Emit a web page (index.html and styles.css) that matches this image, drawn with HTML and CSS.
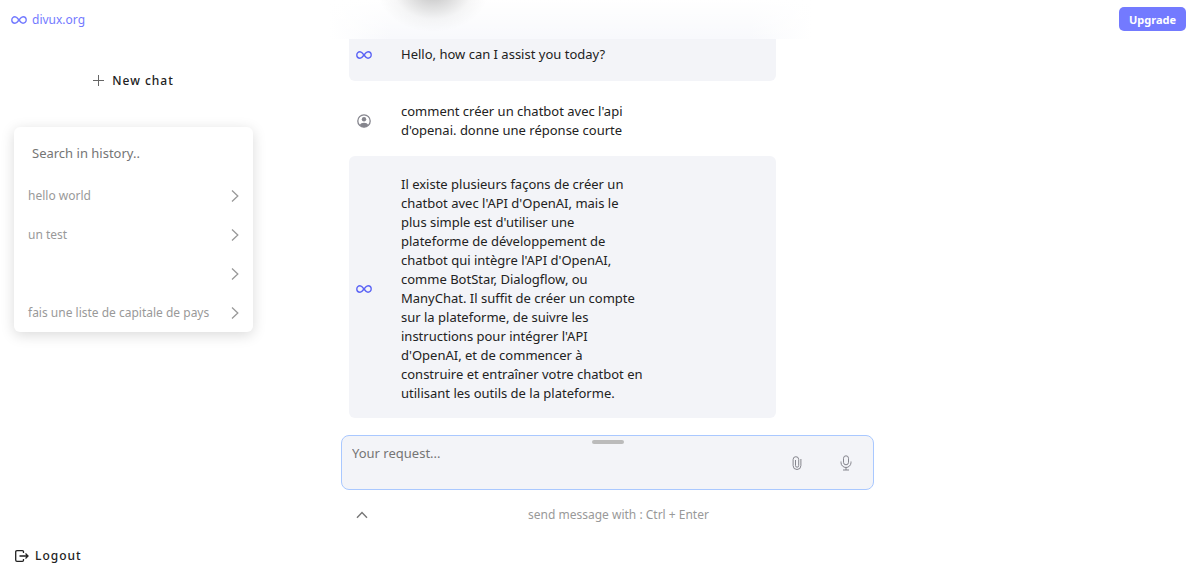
FILE: index.html
```html
<!DOCTYPE html>
<html lang="en">
<head>
    <meta charset="UTF-8">
    <meta name="viewport" content="width=device-width, initial-scale=1.0">
    <title>divux.org</title>
    <link rel="stylesheet" href="styles.css">
</head>
<body>
    <!-- shared icons -->
    <svg class="symbols" aria-hidden="true">
        <symbol id="infinity" viewBox="0 0 16 8">
            <path d="M8 4C6.600 2 5.600 .8 4 .8a3.200 3.200 0 0 0 0 6.400C5.600 7.200 6.600 6 8 4s2.400-3.200 4-3.200a3.200 3.200 0 0 1 0 6.400C10.400 7.200 9.400 6 8 4z"/>
        </symbol>
        <symbol id="chevron" viewBox="0 0 8 14">
            <path d="M1 1.500L6.800 7L1 12.500"/>
        </symbol>
    </svg>

    <div class="app">
        <aside class="sidebar">
            <a class="brand" href="#">
                <svg class="infinity"><use href="#infinity"/></svg>
                divux.org
            </a>

            <button class="new-chat" type="button">
                <svg width="11" height="11" viewBox="0 0 11 11"><path d="M5.500 0v11M0 5.500h11"/></svg>
                New chat
            </button>

            <div class="history">
                <input class="search" type="text" placeholder="Search in history.." aria-label="Search in history">
                <ul>
                    <li><a href="#">hello world <svg class="chevron"><use href="#chevron"/></svg></a></li>
                    <li><a href="#">un test <svg class="chevron"><use href="#chevron"/></svg></a></li>
                    <li><a href="#" aria-label="Untitled"><span></span><svg class="chevron"><use href="#chevron"/></svg></a></li>
                    <li><a href="#">fais une liste de capitale de pays <svg class="chevron"><use href="#chevron"/></svg></a></li>
                </ul>
            </div>

            <button class="logout" type="button">
                <svg width="14" height="12" viewBox="0 0 14 12">
                    <path d="M8.500 3V1.800Q8.500.7 7.400.7H2Q.7.700.7 2v8q0 1.300 1.300 1.300h5.400q1.100 0 1.100-1.100V9M4.500 6h8.300M10.500 3.500L13 6l-2.500 2.500"/>
                </svg>
                Logout
            </button>
        </aside>

        <main class="main">
            <div class="chat">
                <div class="chat-top"></div>
                <div class="message bot greeting">
                    <svg class="infinity"><use href="#infinity"/></svg>
                    <p>Hello, how can I assist you today?</p>
                </div>
                <div class="message user">
                    <svg class="avatar" width="14" height="14" viewBox="0 0 14 14">
                        <circle class="ring" cx="7" cy="7" r="6.200"/>
                        <circle cx="7" cy="5.300" r="2.200"/>
                        <path d="M2.600 11Q3.800 8.700 7 8.700T11.400 11Q9.500 13.200 7 13.200T2.600 11z"/>
                    </svg>
                    <p>comment créer un chatbot avec l'api d'openai. donne une réponse courte</p>
                </div>
                <div class="message bot">
                    <svg class="infinity"><use href="#infinity"/></svg>
                    <p>Il existe plusieurs façons de créer un chatbot avec l'API d'OpenAI, mais le plus simple est d'utiliser une plateforme de développement de chatbot qui intègre l'API d'OpenAI, comme BotStar, Dialogflow, ou ManyChat. Il suffit de créer un compte sur la plateforme, de suivre les instructions pour intégrer l'API d'OpenAI, et de commencer à construire et entraîner votre chatbot en utilisant les outils de la plateforme.</p>
                </div>
            </div>

            <form class="composer">
                <span class="handle"></span>
                <textarea placeholder="Your request..." aria-label="Your request"></textarea>
                <button type="button" aria-label="Attach a file">
                    <svg width="10" height="14" viewBox="0 0 10 14">
                        <path d="M8.900 3v6.600a3.900 3.900 0 0 1-7.800 0V3.500a2.800 2.800 0 0 1 5.600 0V9.600a1.600 1.600 0 0 1-3.200 0V4"/>
                    </svg>
                </button>
                <button type="button" aria-label="Record">
                    <svg width="12" height="16" viewBox="0 0 12 16">
                        <rect x="3.500" y=".8" width="5" height="9" rx="2.500"/>
                        <path d="M1 6.500v1a5 5 0 0 0 10 0v-1M6 12.500V15M3 15h6"/>
                    </svg>
                </button>
            </form>

            <div class="hint">
                <button type="button" aria-label="Show options">
                    <svg width="12" height="8" viewBox="0 0 12 8"><path d="M1 6.800L6 1.500l5 5.300"/></svg>
                </button>
                <p>send message with : Ctrl + Enter</p>
            </div>
        </main>

        <div class="account">
            <button class="upgrade" type="button">Upgrade</button>
        </div>
    </div>
</body>
</html>
```
FILE: styles.css
```css
* {
    box-sizing: border-box;
}
body {
    margin: 0;
    background-color: #fff;
    color: #222;
    font-family: "Noto Sans", "Open Sans", sans-serif;
    font-size: 13px;
    line-height: 19px;
}
button {
    padding: 0;
    border: none;
    background: none;
    color: inherit;
    font: inherit;
    cursor: pointer;
}
svg {
    fill: none;
    stroke: currentColor;
    flex: none;
}
p, ul {
    margin: 0;
    padding: 0;
}
.symbols {
    display: none;
}
.infinity {
    width: 16px;
    height: 8px;
    color: #5b63f5;
    stroke-width: 1.4;
}
.app {
    display: grid;
    grid-template-columns: 267px 1fr 252px;
    grid-template-rows: minmax(0, 1fr);
    height: 100vh;
}

/* sidebar */
.sidebar {
    display: flex;
    flex-direction: column;
    padding: 10px 14px 12px;
}
.brand {
    display: flex;
    align-items: center;
    gap: 5px;
    margin-left: -3px;
    color: #737aff;
    font-size: 12px;
    text-decoration: none;
}
.brand .infinity {
    color: inherit;
}
.new-chat,
.logout {
    display: flex;
    align-items: center;
    font-size: 12px;
    font-weight: 500;
    letter-spacing: 1px;
}
.new-chat {
    align-self: center;
    gap: 8px;
    margin: 42px 0 37px;
}
.new-chat svg {
    color: #666;
}
.history {
    border-radius: 6px;
    background-color: #fff;
    box-shadow: 0 3px 14px rgba(0, 0, 0, 0.15);
}
.history ul {
    list-style: none;
}
.history a {
    display: flex;
    align-items: center;
    justify-content: space-between;
    height: 39px;
    padding: 0 14px;
    color: #999;
    font-size: 12px;
    text-decoration: none;
}
.chevron {
    width: 8px;
    height: 14px;
    stroke-width: 1.3;
}
.search {
    display: block;
    width: 100%;
    height: 49px;
    padding: 3px 18px 0;
    border: none;
    background: none;
    font: inherit;
    outline: none;
}
.search::placeholder,
textarea::placeholder {
    color: #757575;
}
.logout {
    gap: 6px;
    margin-top: auto;
    margin-left: 1px;
}
.logout svg {
    stroke-width: 1.3;
}

/* conversation */
.main {
    display: flex;
    flex-direction: column;
    min-width: 0;
    padding: 0 74px 49px;
}
.chat {
    position: relative;
    display: flex;
    flex: 1;
    flex-direction: column;
    justify-content: flex-end;
    min-height: 0;
    margin: 0 -11px 17px;
    padding: 0 109px 0 19px;
    overflow: hidden;
}
.chat-top {
    position: absolute;
    z-index: 1;
    top: 0;
    left: 0;
    right: 74px;
    height: 39px;
    background: linear-gradient(90deg, #fff, #f8f9fc 60px calc(100% - 60px), #fff);
}
.chat-top::before {
    content: "";
    position: absolute;
    inset: 0;
    background:
        radial-gradient(ellipse 56px 42px at 103px -10px, rgba(0, 0, 0, 0.26), rgba(0, 0, 0, 0.14) 35%, rgba(0, 0, 0, 0.03) 70%, transparent),
        linear-gradient(#fff, transparent);
}
.message {
    display: flex;
    flex: none;
    align-items: center;
    padding: 19px 7px 15px;
    border-radius: 6px;
}
.message p {
    width: 243px;
    margin-left: 29px;
}
.bot {
    background-color: #f3f4f8;
}
.greeting {
    padding-bottom: 17px;
}
.user {
    padding: 21px 8px 16px;
}
.user p {
    margin-left: 30px;
}
.avatar {
    color: #85858d;
    fill: currentColor;
    stroke: none;
}
.avatar .ring {
    fill: none;
    stroke: currentColor;
    stroke-width: 1.3;
}

/* composer */
.composer {
    position: relative;
    display: flex;
    align-items: center;
    gap: 38px;
    height: 55px;
    padding: 0 21px 0 10px;
    border: 1px solid #a9c8ff;
    border-radius: 8px;
    background-color: #f3f4f8;
    color: #85858d;
}
.composer button {
    display: flex;
}
.handle {
    position: absolute;
    top: 4px;
    left: 50%;
    width: 32px;
    height: 4px;
    border-radius: 2px;
    background-color: #bbb;
    transform: translateX(-50%);
}
textarea {
    flex: 1;
    min-width: 0;
    height: 100%;
    padding: 8px 0;
    border: none;
    background: none;
    font: inherit;
    resize: none;
    outline: none;
}
.hint {
    display: grid;
    grid-template-columns: 12px 1fr;
    align-items: center;
    gap: 10px;
    margin-top: 12px;
    padding: 0 15px;
    color: #999;
    font-size: 12px;
    line-height: 26px;
    text-align: center;
}
.hint button {
    display: flex;
    color: #777;
}
.hint svg {
    stroke-width: 1.4;
}

/* account */
.account {
    padding: 7px 14px;
    text-align: right;
}
.upgrade {
    height: 24px;
    padding: 0 10px;
    border-radius: 5px;
    background-color: #737aff;
    color: #fff;
    font-size: 11px;
    font-weight: 700;
}
```
